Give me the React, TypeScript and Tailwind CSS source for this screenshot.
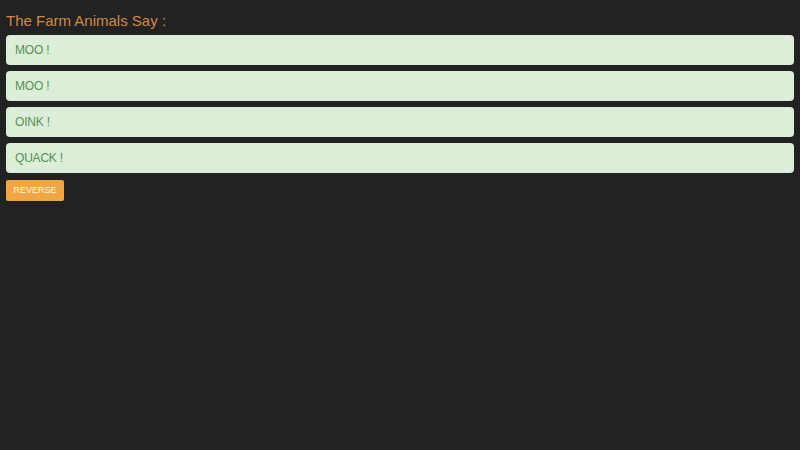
import React, { useState } from 'react';

const App: React.FC = () => {
  const [sounds, setSounds] = useState(['MOO !', 'MOO !', 'OINK !', 'QUACK !']);

  return (
    <div
      className="min-h-[450px] w-full bg-[#222222] p-[6px]"
      style={{ fontFamily: '"Liberation Sans", Arial, sans-serif' }}
    >
      <h1 className="mb-[4px] pt-[5px] text-[15px] leading-[20px] text-[#cf8a44]">
        The Farm Animals Say :
      </h1>
      <ul className="flex flex-col gap-[6px]">
        {sounds.map((sound, i) => (
          <li
            key={i}
            className="flex h-[30px] items-center rounded-[4px] bg-[#ddeed8] pl-[9px] text-[12px] tracking-[-0.2px] text-[#529252]"
          >
            {sound}
          </li>
        ))}
      </ul>
      <button
        onClick={() => setSounds([...sounds].reverse())}
        className="mt-[7px] h-[21px] w-[58px] rounded-[2px] bg-[#f0a742] text-[9px] text-[#fdf3e3]"
      >
        REVERSE
      </button>
    </div>
  );
};

export default App;
